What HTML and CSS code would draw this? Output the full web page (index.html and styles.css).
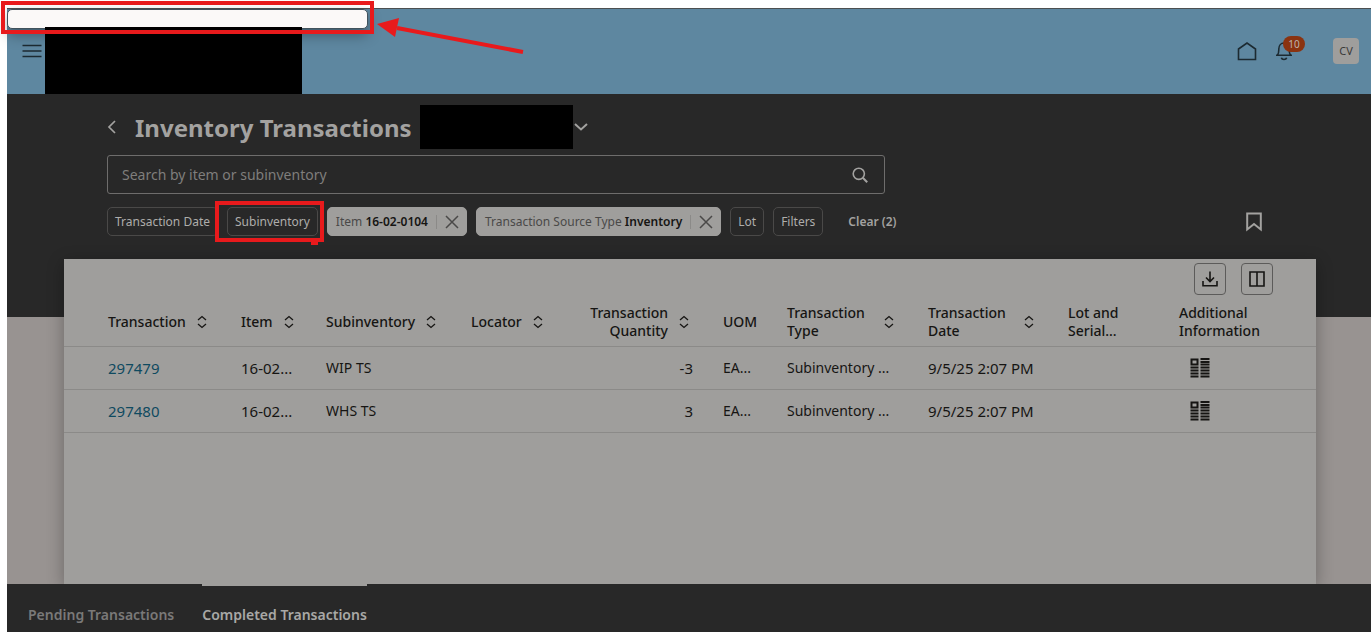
FILE: index.html
```
<!DOCTYPE html>
<html lang="en">
<head>
    <meta charset="UTF-8">
    <meta name="viewport" content="width=device-width, initial-scale=1.0">
    <title>Inventory Transactions</title>
    <link rel="stylesheet" href="styles.css">
</head>
<body>
    <svg class="symbols" width="0" height="0">
        <symbol id="sort" viewBox="0 0 10 14">
            <path d="M1 5 L5 1.5 L9 5 M1 9 L5 12.5 L9 9" fill="none" stroke="currentColor" stroke-width="1.3"/>
        </symbol>
        <symbol id="cross" viewBox="0 0 14 14">
            <path d="M1 1 L13 13 M13 1 L1 13" fill="none" stroke="currentColor" stroke-width="1.5"/>
        </symbol>
        <symbol id="details" viewBox="0 0 20 20">
            <path d="M1.5 1.5 H7.5 V6.5 H1.5 Z" fill="none" stroke="currentColor" stroke-width="2"/>
            <path d="M0.5 9.5 H8.5 M0.5 12.5 H8.5 M0.5 15.5 H8.5 M0.5 18.5 H8.5 M10.5 1 H19.5 M10.5 4 H19.5 M10.5 6.5 H19.5 M10.5 9.5 H19.5 M10.5 12.5 H19.5 M10.5 15.5 H19.5 M10.5 18.5 H19.5" stroke="currentColor" stroke-width="2.1"/>
        </symbol>
    </svg>

    <div class="app">
        <div class="popup"></div>
        <header class="topbar">
            <button class="icon-btn menu" aria-label="Menu">
                <svg width="20" height="14" viewBox="0 0 20 14"><path d="M0.5 1.5 H19.5 M0.5 7 H19.5 M0.5 12.5 H19.5" stroke="currentColor" stroke-width="1.6"/></svg>
            </button>
            <div class="logo"></div>
            <div class="top-actions">
                <button class="icon-btn" aria-label="Home">
                    <svg width="20" height="20" viewBox="0 0 20 20"><path d="M1.5 18.5 V8 L10 2 L18.5 8 V18.5 Z" fill="none" stroke="currentColor" stroke-width="1.6"/></svg>
                </button>
                <button class="icon-btn bell" aria-label="Notifications">
                    <svg width="18" height="20" viewBox="0 0 18 20"><path d="M1 14.2 H17 M2.5 14 C4 12 3.8 10 3.8 8 C3.8 4.5 6 2 9 2 C12 2 14.2 4.5 14.2 8 C14.2 10 14 12 15.5 14 M6.3 16.8 C7 19 11 19 11.7 16.8" fill="none" stroke="currentColor" stroke-width="1.6"/></svg>
                    <span class="badge">10</span>
                </button>
                <button class="avatar">CV</button>
            </div>
        </header>

        <section class="hero">
            <div class="title-row">
                <button class="icon-btn back" aria-label="Back">
                    <svg width="10" height="14" viewBox="0 0 10 14"><path d="M8 1 L2 7 L8 13" fill="none" stroke="currentColor" stroke-width="1.7"/></svg>
                </button>
                <h1>Inventory Transactions</h1>
                <div class="org"></div>
                <button class="icon-btn" aria-label="Change organization">
                    <svg width="14" height="10" viewBox="0 0 14 10"><path d="M1 2 L7 7.5 L13 2" fill="none" stroke="currentColor" stroke-width="2"/></svg>
                </button>
            </div>

            <div class="search">
                <input type="text" placeholder="Search by item or subinventory" aria-label="Search by item or subinventory">
                <button class="icon-btn" aria-label="Search">
                    <svg width="16" height="16" viewBox="0 0 16 16"><circle cx="6.8" cy="6.8" r="5.6" fill="none" stroke="currentColor" stroke-width="1.6"/><path d="M10.8 10.8 L15.2 15.2" stroke="currentColor" stroke-width="2"/></svg>
                </button>
            </div>

            <div class="filters">
                <button class="chip">Transaction Date</button>
                <div class="marked">
                    <button class="chip">Subinventory</button>
                    <div class="mark"></div>
                </div>
                <div class="chip on">
                    <span>Item <b>16-02-0104</b></span>
                    <button class="icon-btn" aria-label="Remove item filter"><svg width="14" height="14"><use href="#cross"/></svg></button>
                </div>
                <div class="chip on">
                    <span>Transaction Source Type <b>Inventory</b></span>
                    <button class="icon-btn" aria-label="Remove source type filter"><svg width="14" height="14"><use href="#cross"/></svg></button>
                </div>
                <button class="chip">Lot</button>
                <button class="chip">Filters</button>
                <button class="clear">Clear (2)</button>
                <button class="icon-btn bookmark" aria-label="Save search">
                    <svg width="16" height="20" viewBox="0 0 16 20"><path d="M1.2 1.6 H14.8 V17.5 L8 12 L1.2 17.5 Z" fill="none" stroke="currentColor" stroke-width="2"/></svg>
                </button>
            </div>
        </section>

        <main class="content">
            <div class="card">
                <div class="toolbar">
                    <button class="tool" aria-label="Download">
                        <svg width="16" height="16" viewBox="0 0 16 16"><path d="M8 0.5 V10.5 M4 6.5 L8 10.5 L12 6.5 M1 10 V14.8 H15 V10" fill="none" stroke="currentColor" stroke-width="1.6"/></svg>
                    </button>
                    <button class="tool" aria-label="Columns">
                        <svg width="16" height="16" viewBox="0 0 16 16"><path d="M1 1 H15 V15 H1 Z M8 1 V15" fill="none" stroke="currentColor" stroke-width="1.6"/></svg>
                    </button>
                </div>
                <table>
                    <colgroup>
                        <col class="c-id"><col class="c-item"><col class="c-sub"><col class="c-loc"><col class="c-qty"><col class="c-uom"><col class="c-type"><col class="c-date"><col class="c-lot"><col class="c-info">
                    </colgroup>
                    <thead>
                        <tr>
                            <th><div class="head">Transaction<svg width="10" height="14"><use href="#sort"/></svg></div></th>
                            <th><div class="head">Item<svg width="10" height="14"><use href="#sort"/></svg></div></th>
                            <th><div class="head">Subinventory<svg width="10" height="14"><use href="#sort"/></svg></div></th>
                            <th><div class="head">Locator<svg width="10" height="14"><use href="#sort"/></svg></div></th>
                            <th class="num"><div class="head"><span>Transaction<br>Quantity</span><svg width="10" height="14"><use href="#sort"/></svg></div></th>
                            <th>UOM</th>
                            <th><div class="head wide"><span>Transaction<br>Type</span><svg width="10" height="14"><use href="#sort"/></svg></div></th>
                            <th><div class="head wide"><span>Transaction<br>Date</span><svg width="10" height="14"><use href="#sort"/></svg></div></th>
                            <th>Lot and<br>Serial...</th>
                            <th>Additional<br>Information</th>
                        </tr>
                    </thead>
                    <tbody>
                        <tr>
                            <td class="fig"><a href="#">297479</a></td>
                            <td class="fig">16-02...</td>
                            <td>WIP TS</td>
                            <td></td>
                            <td class="fig num">-3</td>
                            <td>EA...</td>
                            <td>Subinventory ...</td>
                            <td class="fig">9/5/25 2:07 PM</td>
                            <td></td>
                            <td><button class="icon-btn info" aria-label="Additional information"><svg width="20" height="20"><use href="#details"/></svg></button></td>
                        </tr>
                        <tr>
                            <td class="fig"><a href="#">297480</a></td>
                            <td class="fig">16-02...</td>
                            <td>WHS TS</td>
                            <td></td>
                            <td class="fig num">3</td>
                            <td>EA...</td>
                            <td>Subinventory ...</td>
                            <td class="fig">9/5/25 2:07 PM</td>
                            <td></td>
                            <td><button class="icon-btn info" aria-label="Additional information"><svg width="20" height="20"><use href="#details"/></svg></button></td>
                        </tr>
                    </tbody>
                </table>
            </div>
        </main>

        <nav class="tabs">
            <a href="#">Pending Transactions</a>
            <a href="#" class="active">Completed Transactions</a>
        </nav>
    </div>

    <div class="frame"></div>
    <svg class="arrow" width="152" height="42" viewBox="0 0 152 42">
        <path d="M22 13 L148 37" stroke="#e81a1c" stroke-width="4"/>
        <path d="M2 9 L24 3 L20 22 Z" fill="#e81a1c"/>
    </svg>
</body>
</html>
```
FILE: styles.css
```
*{
    box-sizing: border-box;
}
body{
    margin: 0;
    background: #fff;
    color: #161513;
    font-family: "Noto Sans", "Open Sans", sans-serif;
    font-size: 14px;
    line-height: 18px;
}
button{
    font-family: inherit;
    cursor: pointer;
}
svg{
    display: block;
    flex: none;
}
.symbols{
    position: absolute;
}
.app{
    position: relative;
    display: flex;
    flex-direction: column;
    min-height: 100vh;
    padding: 8px 0 0 7px;
}
.icon-btn{
    display: flex;
    padding: 0;
    border: 0;
    background: none;
    color: inherit;
}

/* top bar */
.topbar{
    display: flex;
    align-items: center;
    height: 86px;
    padding: 0 12px 0 15px;
    border-top: 1px solid #4c5052;
    background: #5e87a0;
    color: #1c2a31;
}
.menu{
    padding-bottom: 2px;
}
.popup{
    position: absolute;
    left: 7px;
    top: 9px;
    width: 361px;
    height: 20px;
    border: 1px solid #41525c;
    border-radius: 5px;
    background: #fbf9f8;
    box-shadow: 0 6px 14px rgba(0, 0, 0, 0.35);
}
.logo{
    position: relative;
    align-self: flex-end;
    width: 257px;
    height: 67px;
    margin-left: 3px;
    background: #000;
}
.top-actions{
    display: flex;
    align-items: center;
    gap: 18px;
    margin-left: auto;
    padding-bottom: 2px;
}
.bell{
    position: relative;
}
.badge{
    position: absolute;
    left: 8px;
    top: -5px;
    width: 22px;
    height: 16px;
    border-radius: 8px;
    background: #8a3310;
    color: #bdb3ae;
    font-size: 10px;
    line-height: 16px;
    text-align: center;
}
.avatar{
    width: 26px;
    height: 26px;
    margin-left: 22px;
    padding: 0;
    border: 0;
    border-radius: 4px;
    background: #9f9e9c;
    color: #3a3938;
    font-size: 11px;
}

/* title, search and filters */
.hero{
    padding: 10px 109px 81px 100px;
    background: #282828;
    color: #a3a2a0;
}
.title-row{
    display: flex;
    align-items: center;
    height: 45px;
}
.back{
    width: 28px;
}
h1{
    margin: 0 8px 0 0;
    padding-top: 2px;
    font-size: 24px;
    line-height: 32px;
}
.org{
    width: 153px;
    height: 44px;
    margin-right: 1px;
    background: #000;
}
.search{
    display: flex;
    align-items: center;
    max-width: 778px;
    height: 39px;
    margin: 6px 0 13px;
    padding: 0 16px 0 14px;
    border: 1px solid #6e6d6c;
    border-radius: 3px;
}
.search input{
    flex: 1;
    padding: 0;
    border: 0;
    outline: 0;
    background: none;
    color: inherit;
    font: inherit;
}
.search input::placeholder{
    color: #7f7e7c;
}
.filters{
    display: flex;
    align-items: center;
    gap: 9px;
}
.chip{
    display: flex;
    align-items: center;
    height: 29px;
    padding: 0 7px;
    border: 1px solid #4a4948;
    border-radius: 5px;
    background: none;
    color: #aeadab;
    font-size: 12px;
    font-weight: 400;
    white-space: nowrap;
}
.chip.on{
    padding: 0 7px 0 8px;
    border-color: #9f9e9c;
    background: #9f9e9c;
    color: #4a4948;
}
.chip b{
    color: #161513;
    font-weight: 600;
}
.chip .icon-btn{
    margin-left: 8px;
    padding-left: 8px;
    border-left: 1px solid #8b8a88;
}
.marked{
    position: relative;
}
.mark{
    position: absolute;
    top: -6px;
    right: -6px;
    bottom: -6px;
    left: -12px;
    border: 4px solid #e81a1c;
}
.mark::after{
    content: "";
    position: absolute;
    right: 2px;
    bottom: -7px;
    width: 7px;
    height: 4px;
    background: #e81a1c;
}
.clear{
    margin-left: 16px;
    padding: 0;
    border: 0;
    background: none;
    color: #a3a2a0;
    font-size: 12px;
    font-weight: 600;
}
.bookmark{
    margin-left: auto;
}

/* results */
.content{
    flex: 1;
    display: flex;
    padding: 0 55px 0 57px;
    background: #989391;
}
.card{
    flex: 1;
    margin-top: -58px;
    background: #9f9e9c;
    box-shadow: 0 4px 16px rgba(0, 0, 0, 0.3);
}
.toolbar{
    display: flex;
    justify-content: flex-end;
    gap: 15px;
    padding: 4px 43px 1px;
}
.tool{
    display: flex;
    align-items: center;
    justify-content: center;
    width: 32px;
    height: 32px;
    padding: 0;
    border: 1px solid #5c5b5a;
    border-radius: 4px;
    background: none;
    color: #161513;
}
table{
    width: 100%;
    table-layout: fixed;
    border-collapse: collapse;
}
.c-id{ width: 162px; }
.c-item{ width: 85px; }
.c-sub{ width: 145px; }
.c-loc{ width: 109px; }
.c-qty{ width: 143px; }
.c-uom{ width: 64px; }
.c-type{ width: 141px; }
.c-date{ width: 140px; }
.c-lot{ width: 111px; }
.c-info{ width: 152px; }
th, td{
    padding: 0 15px;
    border-bottom: 1px solid #8b8a88;
    text-align: left;
    white-space: nowrap;
}
th{
    height: 50px;
    padding-top: 3px;
    font-weight: 500;
}
td{
    height: 43px;
}
th:first-child, td:first-child{
    padding-left: 44px;
}
th:last-child{
    padding-right: 0;
}
.head{
    display: flex;
    align-items: center;
    gap: 11px;
}
.head.wide{
    justify-content: space-between;
    margin-right: 4px;
}
.num{
    text-align: right;
}
.num .head{
    justify-content: flex-end;
    margin-right: 4px;
}
.fig{
    font-size: 15px;
}
td a{
    color: #0f4a60;
    text-decoration: none;
}
.info{
    margin-left: 11px;
}

/* bottom tabs */
.tabs{
    position: relative;
    display: flex;
    gap: 28px;
    height: 48px;
    padding-left: 21px;
    background: #282828;
}
.tabs a{
    padding-top: 20px;
    border-top: 2px solid transparent;
    color: #7a7978;
    font-weight: 600;
    text-decoration: none;
}
.tabs .active{
    border-color: #9f9e9c;
    color: #a9a8a6;
}

/* red call-outs */
.frame{
    position: absolute;
    left: 1px;
    top: 1px;
    width: 373px;
    height: 33px;
    border: 4px solid #e81a1c;
}
.arrow{
    position: absolute;
    left: 375px;
    top: 15px;
}
```
